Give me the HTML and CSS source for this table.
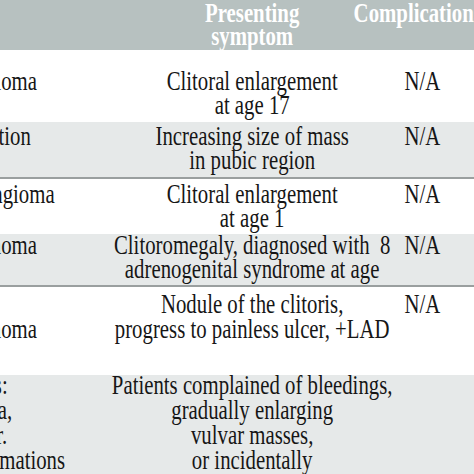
FILE: index.html
```html
<!DOCTYPE html>
<html>
<head>
<meta charset="utf-8">
<link rel="stylesheet" href="styles.css">
</head>
<body>
<div class="page">
  <div class="row head">
    <div class="cell c1"></div>
    <div class="cell c2"><div class="txt hd">Presenting<br>symptom</div></div>
    <div class="cell c3 nowrap"><div class="txt hd">Complications</div></div>
  </div>
  <div class="row r1 white">
    <div class="cell c1"><div class="txt s1">loma</div></div>
    <div class="cell c2"><div class="txt">Clitoral enlargement<br>at age 17</div></div>
    <div class="cell c3"><div class="txt">N/A</div></div>
  </div>
  <div class="row r2 grey ruled">
    <div class="cell c1"><div class="txt s2">tion</div></div>
    <div class="cell c2"><div class="txt">Increasing size of mass<br>in pubic region</div></div>
    <div class="cell c3"><div class="txt">N/A</div></div>
  </div>
  <div class="row r3 white">
    <div class="cell c1"><div class="txt s3">ngioma</div></div>
    <div class="cell c2"><div class="txt">Clitoral enlargement<br>at age 1</div></div>
    <div class="cell c3"><div class="txt">N/A</div></div>
  </div>
  <div class="row r4 grey ruled">
    <div class="cell c1"><div class="txt s4">noma</div></div>
    <div class="cell c2"><div class="txt">Clitoromegaly, diagnosed with &nbsp;8<br>adrenogenital syndrome at age</div></div>
    <div class="cell c3"><div class="txt">N/A</div></div>
  </div>
  <div class="row r5 white">
    <div class="cell c1"><div class="txt s5"><br>noma</div></div>
    <div class="cell c2"><div class="txt">Nodule of the clitoris,<br>progress to painless ulcer, +LAD</div></div>
    <div class="cell c3"><div class="txt">N/A</div></div>
  </div>
  <div class="row r6 grey">
    <div class="cell c1"><div class="txt s6"><span class="l6a">s:</span><span class="l6b">ma,</span><span class="l6c">r.</span><span class="l6d">mations</span></div></div>
    <div class="cell c2"><div class="txt">Patients complained of bleedings,<br>gradually enlarging<br>vulvar masses,<br>or incidentally</div></div>
    <div class="cell c3"></div>
  </div>
</div>
</body>
</html>
```
FILE: styles.css
```css
html, body {
  margin: 0;
  padding: 0;
  background: #ffffff;
  overflow: hidden;
  width: 474px;
  height: 474px;
}
.page {
  width: 616px;
  transform: scaleX(0.77);
  transform-origin: 0 0;
  font-family: "Liberation Serif", "Times New Roman", serif;
  font-size: 27px;
  line-height: 24px;
  color: #161616;
}
.row {
  display: grid;
  grid-template-columns: 135px 385px 57px 1fr;
  overflow: visible;
}
.cell {
  display: flex;
  justify-content: center;
  align-items: flex-start;
  min-width: 0;
}
.c1 {
  justify-content: flex-start;
}
.nowrap {
  white-space: nowrap;
}
.txt {
  text-align: center;
  white-space: nowrap;
}
.c1 .txt {
  text-align: left;
}
.head {
  height: 50px;
  background: #b7c1c0;
  color: #ffffff;
  font-weight: bold;
}
.hd {
  margin-top: 2px;
  line-height: 23px;
}
.head .c3 .hd {
  margin-left: -12px;
}
.white { background: #ffffff; }
.grey { background: #e6e9e9; }
.ruled { border-bottom: 2px solid #9a9f9f; }
.r1 { height: 72px; }
.r1 .txt { margin-top: 19px; }
.r2 { height: 55px; }
.r2 .txt { margin-top: 2px; }
.r3 { height: 55px; }
.r3 .txt { margin-top: 3px; }
.r4 { height: 51px; }
.r4 .txt { margin-top: -1px; }
.r5 { height: 88px; }
.r5 .txt { margin-top: 5px; line-height: 25px; }
.r6 { height: 110px; }
.r6 .txt { margin-top: -2px; line-height: 25px; }
.s1 { margin-left: -6px; }
.s2 { margin-left: -2px; }
.s3 { margin-left: -10px; }
.s4 { margin-left: -12px; }
.s5 { margin-left: -12px; }
.s6 { margin-left: 0; }
.s6 span { display: block; }
.l6a { margin-left: -8px; }
.l6b { margin-left: -24px; }
.l6c { margin-left: -5px; }
.l6d { margin-left: -1px; }
```
